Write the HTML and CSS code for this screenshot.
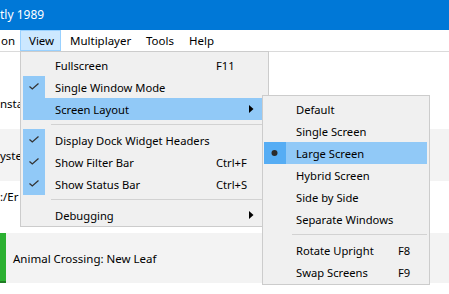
FILE: index.html
```html
<!DOCTYPE html>
<html lang="en">
<head>
  <meta charset="UTF-8" />
  <title>Citra</title>
  <link rel="stylesheet" href="styles.css">
</head>
<body>
  <div class="window">
    <div class="titlebar">tly 1989</div>
    <div class="menubar">
      <span class="mb-item mb-emu">on</span>
      <span class="mb-item mb-view active">View</span>
      <span class="mb-item mb-multi">Multiplayer</span>
      <span class="mb-item mb-tools">Tools</span>
      <span class="mb-item">Help</span>
    </div>

    <div class="gamelist">
      <div class="row">nstal</div>
      <div class="row alt">yste</div>
      <div class="row path">:/Er</div>
      <div class="row alt game">
        <span class="status"></span>
        <span class="title">Animal Crossing: New Leaf</span>
      </div>
    </div>

    <!-- View menu -->
    <div class="menu view-menu">
      <div class="item">
        <span class="check"></span>
        <span class="label">Fullscreen</span>
        <span class="key">F11</span>
      </div>
      <div class="item">
        <span class="check on">
          <svg width="22" height="22" viewBox="0 0 22 22"><path d="M6.5 10.5 L9.3 13 L15.5 7.5" fill="none" stroke="#333" stroke-width="1.3"/></svg>
        </span>
        <span class="label">Single Window Mode</span>
      </div>
      <div class="item hover">
        <span class="check"></span>
        <span class="label">Screen Layout</span>
        <span class="key"></span>
        <span class="arrow"><svg width="5" height="8" viewBox="0 0 5 8"><polygon points="0,0 4.5,4 0,8" fill="#000"/></svg></span>
      </div>
      <div class="sep"></div>
      <div class="item">
        <span class="check on">
          <svg width="22" height="22" viewBox="0 0 22 22"><path d="M6.5 10.5 L9.3 13 L15.5 7.5" fill="none" stroke="#333" stroke-width="1.3"/></svg>
        </span>
        <span class="label">Display Dock Widget Headers</span>
      </div>
      <div class="item">
        <span class="check on">
          <svg width="22" height="22" viewBox="0 0 22 22"><path d="M6.5 10.5 L9.3 13 L15.5 7.5" fill="none" stroke="#333" stroke-width="1.3"/></svg>
        </span>
        <span class="label">Show Filter Bar</span>
        <span class="key">Ctrl+F</span>
      </div>
      <div class="item">
        <span class="check on">
          <svg width="22" height="22" viewBox="0 0 22 22"><path d="M6.5 10.5 L9.3 13 L15.5 7.5" fill="none" stroke="#333" stroke-width="1.3"/></svg>
        </span>
        <span class="label">Show Status Bar</span>
        <span class="key">Ctrl+S</span>
      </div>
      <div class="sep"></div>
      <div class="item">
        <span class="check"></span>
        <span class="label">Debugging</span>
        <span class="key"></span>
        <span class="arrow"><svg width="5" height="8" viewBox="0 0 5 8"><polygon points="0,0 4.5,4 0,8" fill="#000"/></svg></span>
      </div>
    </div>

    <!-- Screen Layout submenu -->
    <div class="menu submenu">
      <div class="item"><span class="check"></span><span class="label">Default</span></div>
      <div class="item"><span class="check"></span><span class="label">Single Screen</span></div>
      <div class="item hover">
        <span class="check on dark">
          <svg width="22" height="22" viewBox="0 0 22 22"><circle cx="10.5" cy="11" r="3" fill="#2b2b2b"/></svg>
        </span>
        <span class="label">Large Screen</span>
      </div>
      <div class="item"><span class="check"></span><span class="label">Hybrid Screen</span></div>
      <div class="item"><span class="check"></span><span class="label">Side by Side</span></div>
      <div class="item"><span class="check"></span><span class="label">Separate Windows</span></div>
      <div class="sep"></div>
      <div class="item"><span class="check"></span><span class="label">Rotate Upright</span><span class="key">F8</span></div>
      <div class="item"><span class="check"></span><span class="label">Swap Screens</span><span class="key">F9</span></div>
    </div>
  </div>
</body>
</html>
```

FILE: styles.css
```css
body { margin: 0; background: #fff; font-family: "Noto Sans", "Open Sans", sans-serif; color: #000; }
.window { position: relative; width: 449px; height: 294px; overflow: hidden; }

.titlebar {
  height: 30px;
  background: #0078d7;
  color: #fff;
  font-size: 12px;
  line-height: 30px;
}

.menubar {
  display: flex;
  height: 21px;
  border-bottom: 1px solid #dadada;
  font-size: 11.5px;
  line-height: 19px;
}
.mb-item {
  box-sizing: border-box;
  padding: 0 0 0 8px;
  border: 1px solid transparent;
  height: 21px;
}
.mb-emu { width: 20px; padding-left: 0; }
.mb-view { width: 41px; }
.mb-multi { width: 76px; }
.mb-tools { width: 43px; }
.mb-item.active { background: #cce8ff; border-color: #99d1ff; }

.gamelist { padding-top: 25px; font-size: 11.5px; }
.row { display: flex; align-items: center; height: 52px; }
.row.alt { background: #f3f3f3; }
.row.path { align-items: flex-start; padding-top: 8px; height: 44px; }
.row.game { height: 50px; }
.status {
  width: 6px;
  height: 48px;
  margin-right: 7px;
  background: #2bb031;
  border-bottom: 2px solid #1f7d23;
}

.menu {
  position: absolute;
  box-sizing: border-box;
  background: #f0f0f0;
  border: 1px solid #cccccc;
  font-size: 11.2px;
}
.view-menu { left: 20px; top: 51px; width: 249px; padding: 2px 6px 0 2px; }
.submenu { left: 262px; top: 95px; width: 168px; padding: 2px 2px 1px 1px; }

.item {
  display: grid;
  grid-template-columns: 32px 161px 33px 1fr;
  align-items: center;
  height: 22px;
}
.submenu .item { grid-template-columns: 32px 102px 1fr; }
.item.hover { background: #91c9f7; }
.check { width: 22px; height: 22px; display: block; }
.check svg { display: block; }
.check.on { background: #91c9f7; }
.check.dark { background: #56adf4; }
.arrow { display: flex; align-items: center; height: 22px; }

.sep {
  height: 1px;
  margin: 4px 0 4px 28px;
  background: #d2d2d2;
}
```
